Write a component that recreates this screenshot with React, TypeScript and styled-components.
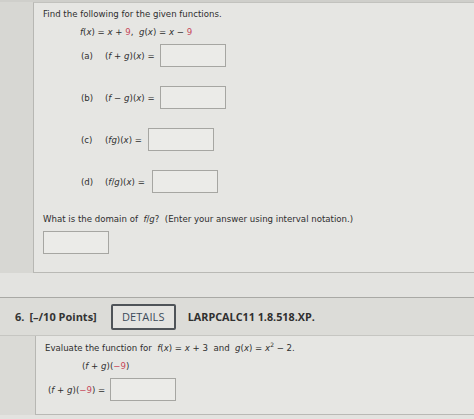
import React from "react";
import styled, { createGlobalStyle } from "styled-components";

const GlobalStyle = createGlobalStyle`
  html, body { margin: 0; padding: 0; }
  body {
    background: #e3e3e0;
    font-family: "DejaVu Sans", Verdana, sans-serif;
    color: #2e2e2e;
  }
`;

const Page = styled.div`
  width: 474px;
  height: 419px;
  overflow: hidden;
  display: flex;
  flex-direction: column;
  background: #e3e3e0;
  border-top: 2px solid #cfcfcb;
  box-sizing: border-box;
`;

const QuestionBody = styled.div<{ $height: number }>`
  display: flex;
  height: ${(p) => p.$height}px;
  flex-shrink: 0;
`;

const Gutter = styled.div<{ $w: number; $tone: string }>`
  width: ${(p) => p.$w}px;
  flex-shrink: 0;
  background: ${(p) => p.$tone};
`;

const Panel = styled.div<{ $top?: boolean; $pt: number }>`
  flex: 1;
  background: #e6e6e3;
  border-left: 1px solid #b7b7b3;
  border-bottom: 1px solid #b9b9b5;
  border-top: ${(p) => (p.$top ? "1px solid #c2c2be" : "none")};
  padding: ${(p) => p.$pt}px 0 0 9px;
  display: flex;
  flex-direction: column;
  align-items: flex-start;
  font-size: 8.6px;
`;

const Line = styled.div<{ $indent?: number; $mt?: number }>`
  line-height: 12px;
  height: 12px;
  white-space: nowrap;
  margin-left: ${(p) => p.$indent ?? 0}px;
  margin-top: ${(p) => p.$mt ?? 0}px;
`;

const V = styled.i`
  font-style: italic;
`;

const Num = styled.span`
  color: #c7485b;
`;

const Sup = styled.sup`
  font-size: 6px;
  line-height: 0;
  vertical-align: 4px;
`;

const PartRow = styled.div<{ $indent: number; $mt: number }>`
  display: flex;
  align-items: center;
  height: 23px;
  margin-left: ${(p) => p.$indent}px;
  margin-top: ${(p) => p.$mt}px;
  white-space: nowrap;
`;

const PartLabel = styled.span`
  width: 24px;
`;

const Expr = styled.span``;

const AnswerBox = styled.div<{ $ml?: number }>`
  width: 66px;
  height: 23px;
  box-sizing: border-box;
  border: 1px solid #a6a6a2;
  background: #ebebe8;
  margin-left: ${(p) => p.$ml ?? 0}px;
  flex-shrink: 0;
`;

const Spacer = styled.div`
  height: 24px;
  flex-shrink: 0;
  background: #e3e3e0;
`;

const HeaderBar = styled.div`
  height: 39px;
  flex-shrink: 0;
  box-sizing: border-box;
  border-top: 1px solid #a9a9a5;
  border-bottom: 1px solid #c6c6c2;
  background: #dcdcd8;
  display: flex;
  align-items: center;
  padding-left: 15px;
  font-family: "Open Sans", "Liberation Sans", sans-serif;
  color: #333;
`;

const QNum = styled.span`
  font-weight: 700;
  font-size: 11px;
  margin-right: 5px;
`;

const Points = styled.span`
  font-weight: 700;
  font-size: 11px;
`;

const DetailsButton = styled.button`
  margin-left: 14px;
  width: 65px;
  height: 26px;
  box-sizing: border-box;
  border: 2px solid #4f5459;
  border-radius: 2px;
  background: #e4e4e1;
  font-family: "Open Sans", "Liberation Sans", sans-serif;
  font-size: 11px;
  font-weight: 500;
  color: #3d4b5a;
  padding: 0;
  letter-spacing: 0.1px;
`;

const CodeTitle = styled.span`
  margin-left: 12px;
  font-weight: 700;
  font-size: 10.8px;
  color: #2f2f2f;
`;

export default function App() {
  return (
    <>
      <GlobalStyle />
      <Page>
        <QuestionBody $height={271}>
          <Gutter $w={33} $tone="#d7d7d3" />
          <Panel $top $pt={5}>
            <Line>Find the following for the given functions.</Line>
            <Line $indent={37} $mt={6}>
              <V>f</V>(<V>x</V>) = <V>x</V> + <Num>9</Num>, &nbsp;<V>g</V>(<V>x</V>) = <V>x</V> − <Num>9</Num>
            </Line>
            <PartRow $indent={38} $mt={6}>
              <PartLabel>(a)</PartLabel>
              <Expr>
                (<V>f</V> + <V>g</V>)(<V>x</V>) =
              </Expr>
              <AnswerBox $ml={5} />
            </PartRow>
            <PartRow $indent={38} $mt={19}>
              <PartLabel>(b)</PartLabel>
              <Expr>
                (<V>f</V> − <V>g</V>)(<V>x</V>) =
              </Expr>
              <AnswerBox $ml={5} />
            </PartRow>
            <PartRow $indent={38} $mt={19}>
              <PartLabel>(c)</PartLabel>
              <Expr>
                (<V>fg</V>)(<V>x</V>) =
              </Expr>
              <AnswerBox $ml={6} />
            </PartRow>
            <PartRow $indent={38} $mt={19}>
              <PartLabel>(d)</PartLabel>
              <Expr>
                (<V>f</V>/<V>g</V>)(<V>x</V>) =
              </Expr>
              <AnswerBox $ml={7} />
            </PartRow>
            <Line $mt={20}>
              What is the domain of &nbsp;<V>f</V>/<V>g</V>? &nbsp;(Enter your answer using interval notation.)
            </Line>
            <PartRow $indent={0} $mt={6}>
              <AnswerBox />
            </PartRow>
          </Panel>
        </QuestionBody>
        <Spacer />
        <HeaderBar>
          <QNum>6.</QNum>
          <Points>[–/10 Points]</Points>
          <DetailsButton>DETAILS</DetailsButton>
          <CodeTitle>LARPCALC11 1.8.518.XP.</CodeTitle>
        </HeaderBar>
        <QuestionBody $height={79}>
          <Gutter $w={35} $tone="#dadad6" />
          <Panel $pt={6}>
            <Line $mt={0}>
              Evaluate the function for &nbsp;<V>f</V>(<V>x</V>) = <V>x</V> + 3 &nbsp;and &nbsp;<V>g</V>(<V>x</V>) = <V>x</V><Sup>2</Sup> − 2.
            </Line>
            <Line $indent={37} $mt={6}>
              (<V>f</V> + <V>g</V>)(<Num>−9</Num>)
            </Line>
            <PartRow $indent={3} $mt={6}>
              <Expr>
                (<V>f</V> + <V>g</V>)(<Num>−9</Num>) =
              </Expr>
              <AnswerBox $ml={5} />
            </PartRow>
          </Panel>
        </QuestionBody>
      </Page>
    </>
  );
}
